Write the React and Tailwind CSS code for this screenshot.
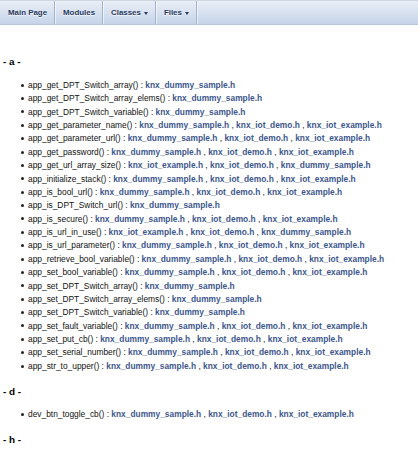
import React from "react";

const D = "knx_dummy_sample.h";
const M = "knx_iot_demo.h";
const E = "knx_iot_example.h";
const ALL = [D, M, E];
const REV = [E, M, D];

const aItems = [
  ["app_get_DPT_Switch_array", [D]],
  ["app_get_DPT_Switch_array_elems", [D]],
  ["app_get_DPT_Switch_variable", [D]],
  ["app_get_parameter_name", ALL],
  ["app_get_parameter_url", ALL],
  ["app_get_password", ALL],
  ["app_get_url_array_size", REV],
  ["app_initialize_stack", ALL],
  ["app_is_bool_url", ALL],
  ["app_is_DPT_Switch_url", [D]],
  ["app_is_secure", ALL],
  ["app_is_url_in_use", REV],
  ["app_is_url_parameter", ALL],
  ["app_retrieve_bool_variable", ALL],
  ["app_set_bool_variable", ALL],
  ["app_set_DPT_Switch_array", [D]],
  ["app_set_DPT_Switch_array_elems", [D]],
  ["app_set_DPT_Switch_variable", [D]],
  ["app_set_fault_variable", ALL],
  ["app_set_put_cb", ALL],
  ["app_set_serial_number", ALL],
  ["app_str_to_upper", ALL],
];

const dItems = [["dev_btn_toggle_cb", ALL]];

function Item({ name, files }) {
  return (
    <li className="flex items-center h-[13.38px] whitespace-pre">
      <span className="ml-[18px] mr-[4px] w-[3px] h-[3px] rounded-full bg-[#222]" />
      <span className="text-[#111]">{name + "()\u00a0:\u00a0"}</span>
      {files.map((f, i) => (
        <React.Fragment key={i}>
          {i > 0 && <span className="text-[#111]">{"\u00a0,\u00a0"}</span>}
          <a className="font-bold text-[#3d578c]">{f}</a>
        </React.Fragment>
      ))}
    </li>
  );
}

function Tab({ label, arrow }) {
  return (
    <div className="flex items-center h-full pl-[8px] pr-[7px] border-r border-r-[#a3b4d2] shadow-[1px_0_0_rgba(255,255,255,0.6)] text-[#283a5d] font-bold text-[7.9px] [text-shadow:0_1px_1px_rgba(255,255,255,0.9)]">
      <span>{label}</span>
      {arrow && (
        <span className="ml-[3px] mt-[1px] w-0 h-0 border-l-[2.5px] border-r-[2.5px] border-t-[3px] border-l-transparent border-r-transparent border-t-[#283a5d]" />
      )}
    </div>
  );
}

export default function App() {
  return (
    <div className="w-[418px] h-[450px] overflow-hidden bg-white font-['Liberation_Sans',Arial,sans-serif]">
      <div className="flex h-[25px] border-t border-t-[#cfd6e2] border-b border-b-[#b7c6df] bg-gradient-to-b from-[#eaeff7] to-[#c6d3e8]">
        <Tab label="Main Page" />
        <Tab label="Modules" />
        <Tab label="Classes" arrow />
        <Tab label="Files" arrow />
      </div>
      <div className="pl-[3px] text-[8.4px]">
        <h3 className="mt-[29.5px] h-[13px] leading-[13px] font-bold text-[9.9px] text-black">- a -</h3>
        <ul className="mt-[11px]">
          {aItems.map(([n, f]) => (
            <Item key={n} name={n} files={f} />
          ))}
        </ul>
        <h3 className="mt-[12.5px] h-[13px] leading-[13px] font-bold text-[9.9px] text-black">- d -</h3>
        <ul className="mt-[9.5px]">
          {dItems.map(([n, f]) => (
            <Item key={n} name={n} files={f} />
          ))}
        </ul>
        <h3 className="mt-[11.8px] h-[13px] leading-[13px] font-bold text-[9.9px] text-black">- h -</h3>
      </div>
    </div>
  );
}
